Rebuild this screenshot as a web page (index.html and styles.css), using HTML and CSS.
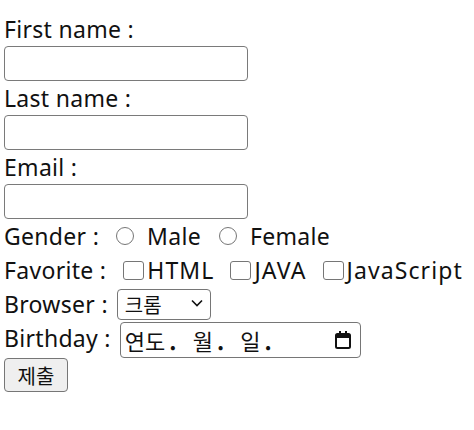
FILE: index.html
```html
<!DOCTYPE html>
<html lang="ko">
<head>
<meta charset="utf-8">
<link rel="stylesheet" href="styles.css">
</head>
<body>
<form class="form">
  <div class="line">First name :</div>
  <input class="text" type="text">
  <div class="line">Last name :</div>
  <input class="text" type="text">
  <div class="line">Email :</div>
  <input class="text" type="email">
  <div class="line row">
    <span class="lbl">Gender :</span>
    <input class="radio" type="radio" name="g"><span class="opt">Male</span>
    <input class="radio" type="radio" name="g"><span class="opt">Female</span>
  </div>
  <div class="line row">
    <span class="lbl">Favorite :</span>
    <input class="check" type="checkbox"><span class="copt">HTML</span>
    <input class="check" type="checkbox"><span class="copt">JAVA</span>
    <input class="check" type="checkbox"><span class="copt">JavaScript</span>
  </div>
  <div class="line row">
    <span class="lbl lbl-tight">Browser :</span>
    <span class="selwrap">
      <select class="sel"><option>크롬</option></select>
      <svg class="chev" width="12" height="8" viewBox="0 0 12 8"><path d="M1 1.5 L6 6.5 L11 1.5" fill="none" stroke="#111" stroke-width="1.6"/></svg>
    </span>
  </div>
  <div class="line row">
    <span class="lbl lbl-tight">Birthday :</span>
    <span class="date">
      <span class="dtext">연도<span class="dot">.</span> 월<span class="dot">.</span> 일<span class="dot">.</span></span>
      <svg class="cal" width="18" height="20" viewBox="0 0 18 20"><rect x="2" y="4" width="14" height="14" rx="1.5" fill="none" stroke="#111" stroke-width="2"/><rect x="2" y="4" width="14" height="4" fill="#111"/><rect x="5" y="1" width="2" height="4" fill="#111"/><rect x="11" y="1" width="2" height="4" fill="#111"/></svg>
    </span>
  </div>
  <button class="btn" type="button">제출</button>
</form>
</body>
</html>
```
FILE: styles.css
```css
html, body {
  margin: 0;
  padding: 0;
  background: #fff;
}
body {
  padding: 12px 4px;
  font-family: "Noto Sans", "Noto Sans CJK KR", sans-serif;
  font-size: 23px;
  letter-spacing: 0.3px;
  color: #111;
}
.form {
  display: flex;
  flex-direction: column;
  align-items: flex-start;
}
.line {
  height: 34px;
  line-height: 34px;
  white-space: nowrap;
}
.row {
  display: flex;
  align-items: center;
}
.text {
  box-sizing: border-box;
  width: 244px;
  height: 35px;
  margin: 0;
  border: 1.5px solid #7a7a7a;
  border-radius: 4px;
  background: #fff;
}
.lbl {
  margin-right: 17px;
}
.lbl-tight {
  margin-right: 9px;
}
.radio {
  appearance: none;
  -webkit-appearance: none;
  box-sizing: border-box;
  width: 18px;
  height: 18px;
  margin: 0 13px 0 0;
  border: 1.5px solid #767676;
  border-radius: 50%;
  background: #fff;
}
.opt {
  margin-right: 18px;
}
.check {
  appearance: none;
  -webkit-appearance: none;
  box-sizing: border-box;
  width: 21px;
  height: 19px;
  margin: 0 3px 0 0;
  border: 1.5px solid #767676;
  border-radius: 3px;
  background: #fff;
}
.copt {
  margin-right: 16px;
  letter-spacing: 1.1px;
}
.selwrap {
  position: relative;
  display: inline-block;
}
.sel {
  appearance: none;
  -webkit-appearance: none;
  box-sizing: border-box;
  width: 94px;
  height: 31px;
  margin: 0;
  padding: 0 0 0 7px;
  border: 1.5px solid #767676;
  border-radius: 4px;
  background: #fff;
  font-family: "Noto Sans CJK KR", sans-serif;
  font-size: 20px;
  color: #111;
}
.chev {
  position: absolute;
  right: 8px;
  top: 12px;
  pointer-events: none;
}
.date {
  box-sizing: border-box;
  display: flex;
  align-items: center;
  justify-content: space-between;
  width: 241px;
  height: 36px;
  margin-top: 3px;
  padding: 0 8px 0 4px;
  border: 1.5px solid #767676;
  border-radius: 4px;
  background: #fff;
  font-family: "Noto Sans CJK KR", sans-serif;
  font-size: 22px;
  letter-spacing: 0;
}
.dtext {
  word-spacing: 10px;
}
.dot {
  margin-left: 4px;
  font-weight: 700;
}
.btn {
  box-sizing: border-box;
  width: 64px;
  height: 34px;
  margin: 3px 0 0 0;
  padding: 0;
  border: 1.5px solid #767676;
  border-radius: 4px;
  background: #efefef;
  font-family: "Noto Sans CJK KR", sans-serif;
  font-size: 20px;
  letter-spacing: 0;
  color: #111;
}
```
